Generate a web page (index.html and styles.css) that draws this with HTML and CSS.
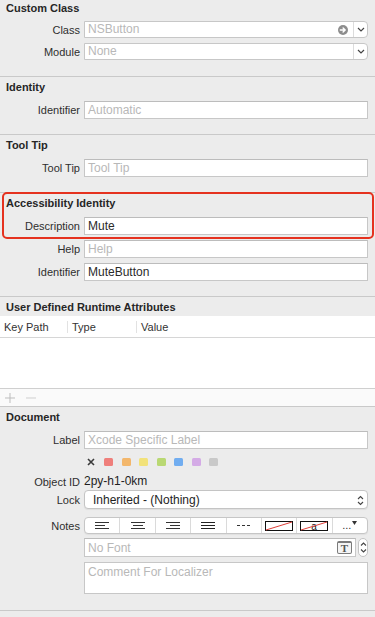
FILE: index.html
```html
<!DOCTYPE html>
<html lang="en">
<head>
<meta charset="utf-8">
<title>Identity Inspector</title>
<link rel="stylesheet" href="styles.css">
</head>
<body>
<div class="inspector">

  <section class="sec sec-first">
    <h3 class="sec-title">Custom Class</h3>
    <div class="rows">
      <div class="row">
        <span class="lbl">Class</span>
        <div class="combo">
          <span class="combo-text ph">NSButton</span>
          <span class="go-icon"><svg width="10" height="10" viewBox="0 0 10 10"><circle cx="5" cy="5" r="5" fill="#8d8d8d"/><path d="M2.3 5h4.8M5.1 2.9L7.2 5 5.1 7.1" stroke="#fff" stroke-width="1.4" fill="none" stroke-linecap="round" stroke-linejoin="round"/></svg></span>
          <span class="combo-btn"><svg width="8" height="5" viewBox="0 0 8 5"><path d="M1 1l3 3 3-3" stroke="#444" stroke-width="1.2" fill="none"/></svg></span>
        </div>
      </div>
      <div class="row">
        <span class="lbl">Module</span>
        <div class="combo">
          <span class="combo-text ph">None</span>
          <span class="combo-btn"><svg width="8" height="5" viewBox="0 0 8 5"><path d="M1 1l3 3 3-3" stroke="#444" stroke-width="1.2" fill="none"/></svg></span>
        </div>
      </div>
    </div>
  </section>

  <section class="sec">
    <h3 class="sec-title">Identity</h3>
    <div class="rows">
      <div class="row">
        <span class="lbl">Identifier</span>
        <div class="field ph">Automatic</div>
      </div>
    </div>
  </section>

  <section class="sec">
    <h3 class="sec-title">Tool Tip</h3>
    <div class="rows">
      <div class="row">
        <span class="lbl">Tool Tip</span>
        <div class="field ph">Tool Tip</div>
      </div>
    </div>
  </section>

  <section class="sec">
    <div class="highlight"></div>
    <h3 class="sec-title">Accessibility Identity</h3>
    <div class="rows">
      <div class="row">
        <span class="lbl">Description</span>
        <div class="field">Mute</div>
      </div>
      <div class="row">
        <span class="lbl">Help</span>
        <div class="field ph">Help</div>
      </div>
      <div class="row">
        <span class="lbl">Identifier</span>
        <div class="field">MuteButton</div>
      </div>
    </div>
  </section>

  <section class="sec sec-table">
    <h3 class="sec-title sec-title-tight">User Defined Runtime Attributes</h3>
    <div class="attr-table">
      <div class="attr-head">
        <span class="col">Key Path</span>
        <span class="col col-sep">Type</span>
        <span class="col col-sep">Value</span>
      </div>
      <div class="attr-body"></div>
      <div class="attr-foot">
        <svg width="10" height="10" viewBox="0 0 10 10"><path d="M5 0v10M0 5h10" stroke="#bdbdbd" stroke-width="1"/></svg>
        <svg width="10" height="10" viewBox="0 0 10 10"><path d="M0 5h10" stroke="#cfcfcf" stroke-width="1"/></svg>
      </div>
    </div>
  </section>

  <section class="sec sec-doc">
    <h3 class="sec-title">Document</h3>
    <div class="doc-rows">
      <div class="row">
        <span class="lbl">Label</span>
        <div class="field ph">Xcode Specific Label</div>
      </div>
      <div class="row row-swatches">
        <span class="lbl"></span>
        <div class="swatches">
          <svg class="swatch-x" width="8" height="8" viewBox="0 0 8 8"><path d="M1 1l6 6M7 1L1 7" stroke="#3a3a3a" stroke-width="1.6"/></svg>
          <span class="swatch sw-red"></span>
          <span class="swatch sw-orange"></span>
          <span class="swatch sw-yellow"></span>
          <span class="swatch sw-green"></span>
          <span class="swatch sw-blue"></span>
          <span class="swatch sw-purple"></span>
          <span class="swatch sw-gray"></span>
        </div>
      </div>
      <div class="row row-objid">
        <span class="lbl">Object ID</span>
        <span class="value">2py-h1-0km</span>
      </div>
      <div class="row row-lock">
        <span class="lbl">Lock</span>
        <div class="popup">
          <span class="popup-text">Inherited - (Nothing)</span>
          <svg width="7" height="11" viewBox="0 0 7 11"><path d="M1 4l2.5-2.5L6 4M1 7l2.5 2.5L6 7" stroke="#444" stroke-width="1.1" fill="none"/></svg>
        </div>
      </div>
      <div class="row row-notes">
        <span class="lbl">Notes</span>
        <div class="segmented">
          <span class="seg"><svg width="14" height="7" viewBox="0 0 14 7"><path d="M0 .5h14M0 3.5h10M0 6.5h14" stroke="#333" stroke-width="1"/></svg></span>
          <span class="seg"><svg width="14" height="7" viewBox="0 0 14 7"><path d="M0 .5h14M2 3.5h10M0 6.5h14" stroke="#333" stroke-width="1"/></svg></span>
          <span class="seg"><svg width="14" height="7" viewBox="0 0 14 7"><path d="M0 .5h14M4 3.5h10M0 6.5h14" stroke="#333" stroke-width="1"/></svg></span>
          <span class="seg"><svg width="14" height="7" viewBox="0 0 14 7"><path d="M0 .5h14M0 3.5h14M0 6.5h14" stroke="#222" stroke-width="1.2"/></svg></span>
          <span class="seg"><svg width="13" height="3" viewBox="0 0 13 3"><path d="M0 1.5h3M5 1.5h3M10 1.5h3" stroke="#333" stroke-width="1.1"/></svg></span>
          <span class="seg"><svg width="28" height="10" viewBox="0 0 28 10"><rect x=".5" y=".5" width="27" height="9" fill="#fff" stroke="#111"/><path d="M1 9L27 1" stroke="#e0403a" stroke-width="1"/></svg></span>
          <span class="seg"><svg width="28" height="10" viewBox="0 0 28 10"><rect x=".5" y=".5" width="27" height="9" fill="#fff" stroke="#111"/><text x="14" y="9" font-family="Liberation Sans, Arial, sans-serif" font-size="10" text-anchor="middle" fill="#222">a</text><path d="M1 9L27 1" stroke="#e0403a" stroke-width="1"/></svg></span>
          <span class="seg seg-more">...<svg width="5" height="4" viewBox="0 0 5 4"><path d="M0 0h5L2.5 4z" fill="#333"/></svg></span>
        </div>
      </div>
      <div class="row row-font">
        <span class="lbl"></span>
        <div class="font-line">
          <div class="field font-field">
            <span class="ph">No Font</span>
            <span class="font-btn">T</span>
          </div>
          <span class="stepper"><svg width="7" height="13" viewBox="0 0 7 13"><path d="M1 4.5l2.5-2.5L6 4.5M1 8.5l2.5 2.5L6 8.5" stroke="#444" stroke-width="1.1" fill="none"/></svg></span>
        </div>
      </div>
      <div class="row row-comment">
        <span class="lbl"></span>
        <div class="textarea ph">Comment For Localizer</div>
      </div>
    </div>
  </section>

  <section class="sec sec-end"></section>
</div>
</body>
</html>
```

FILE: styles.css
```css
* {
  box-sizing: border-box;
  margin: 0;
  padding: 0;
}

html,
body {
  background: #ececec;
}

body {
  width: 375px;
  height: 617px;
  overflow: hidden;
  font-family: "Liberation Sans", Arial, sans-serif;
  font-size: 11px;
  color: #2a2a2a;
}

.inspector {
  display: flex;
  flex-direction: column;
}

.sec {
  position: relative;
  border-top: 1px solid #c9c9c9;
  padding: 2px 0 15px;
}

.sec-first {
  border-top: 0;
  padding: 0 0 16px;
}

.sec-title {
  font-size: 11px;
  font-weight: bold;
  line-height: 16px;
  padding-left: 6px;
  margin-bottom: 6px;
  color: #262626;
}

.sec-first .sec-title {
  margin-bottom: 5px;
}

.sec-title-tight {
  margin-bottom: 1px;
}

.rows {
  display: flex;
  flex-direction: column;
  gap: 5px;
}

.row {
  display: grid;
  grid-template-columns: 80px 1fr;
  column-gap: 4px;
  align-items: center;
  padding-right: 7px;
}

.lbl {
  text-align: right;
  color: #2e2e2e;
  font-size: 11px;
  line-height: 14px;
}

.ph {
  color: #b8b8b8;
}

.field {
  height: 18px;
  background: #fff;
  border: 1px solid #c7c7c7;
  border-top-color: #bcbcbc;
  padding: 0 3px;
  font-size: 12px;
  line-height: 16px;
  white-space: nowrap;
  overflow: hidden;
}

/* combo box */
.combo {
  display: flex;
  align-items: center;
  height: 17px;
  background: #fff;
  border: 1px solid #c7c7c7;
  border-radius: 0 4px 4px 0;
  font-size: 12px;
  line-height: 15px;
}

.combo-text {
  flex: 1;
  padding-left: 3px;
}

.go-icon {
  display: flex;
  margin-right: 5px;
}

.combo-btn {
  width: 14px;
  align-self: stretch;
  border-left: 1px solid #dcdcdc;
  display: flex;
  align-items: center;
  justify-content: center;
}

/* red annotation */
.highlight {
  position: absolute;
  left: 2px;
  right: 1px;
  top: -1px;
  height: 47px;
  border: 2.5px solid #e5321f;
  border-radius: 5px;
  pointer-events: none;
}

/* runtime attributes */
.sec-table {
  padding-bottom: 0;
}

.attr-table {
  background: #fff;
}

.attr-head {
  display: grid;
  grid-template-columns: 67px 69px 1fr;
  align-items: center;
  height: 22px;
  border-bottom: 1px solid #d6d6d6;
  color: #333;
}

.col {
  padding-left: 4px;
  line-height: 12px;
}

.col-sep {
  border-left: 1px solid #e2e2e2;
}

.attr-body {
  height: 50px;
}

.attr-foot {
  height: 18px;
  border-top: 1px solid #cfcfcf;
  background: #fafafa;
  display: flex;
  align-items: center;
  gap: 11px;
  padding-left: 5px;
}

/* document */
.sec-doc {
  padding-bottom: 16px;
}

.doc-rows {
  display: flex;
  flex-direction: column;
}

.row-swatches {
  margin-top: 5px;
  height: 15px;
}

.swatches {
  display: flex;
  align-items: center;
  padding-left: 3px;
}

.swatch-x {
  margin-right: 9px;
}

.swatch {
  width: 9px;
  height: 8px;
  border-radius: 1.5px;
  margin-right: 8.5px;
}

.sw-red { background: #ef7f7b; }
.sw-orange { background: #f3b76c; }
.sw-yellow { background: #f2e27a; }
.sw-green { background: #b9d873; }
.sw-blue { background: #71adf0; }
.sw-purple { background: #d4abe6; }
.sw-gray { background: #c9c9c9; }

.row-objid {
  margin-top: 5px;
  height: 15px;
}

.value {
  font-size: 12px;
  color: #1e1e1e;
  line-height: 15px;
}

.row-lock {
  margin-top: 1px;
}

.popup {
  height: 19px;
  background: #fff;
  border: 1px solid #c4c4c4;
  border-radius: 4px;
  box-shadow: 0 1px 1px rgba(0, 0, 0, 0.06);
  display: flex;
  align-items: center;
  justify-content: space-between;
  padding: 1px 3px 0 8px;
  font-size: 12px;
  color: #1e1e1e;
}

.row-notes {
  margin-top: 8px;
}

.segmented {
  height: 17px;
  display: flex;
  background: #fff;
  border: 1px solid #c6c6c6;
  border-radius: 4px;
  box-shadow: 0 1px 1px rgba(0, 0, 0, 0.05);
}

.seg {
  flex: 1;
  display: flex;
  align-items: center;
  justify-content: center;
}

.seg + .seg {
  border-left: 1px solid #dadada;
}

.seg-more {
  font-size: 11px;
  color: #333;
  line-height: 10px;
  align-items: flex-start;
  padding-top: 2px;
  gap: 1px;
}

.seg-more svg {
  margin-top: 1px;
}

.row-font {
  margin-top: 4px;
}

.font-line {
  display: flex;
  align-items: center;
  gap: 2px;
}

.font-field {
  flex: 1;
  height: 19px;
  display: flex;
  align-items: center;
  justify-content: space-between;
  padding-right: 3px;
}

.font-btn {
  width: 15px;
  height: 13px;
  border: 1.5px solid #7b7b7b;
  border-top-width: 2px;
  border-radius: 2px;
  background: #f4f4f4;
  font-family: "Liberation Serif", "Times New Roman", serif;
  font-weight: bold;
  font-size: 11px;
  line-height: 10px;
  text-align: center;
  color: #555;
}

.stepper {
  width: 10px;
  height: 19px;
  border: 1px solid #c4c4c4;
  border-radius: 5px;
  background: #fff;
  display: flex;
  align-items: center;
  justify-content: center;
}

.row-comment {
  margin-top: 5px;
  align-items: start;
}

.textarea {
  height: 32px;
  background: #fff;
  border: 1px solid #c7c7c7;
  padding: 2px 3px;
  font-size: 12px;
  line-height: 15px;
}

.sec-end {
  height: 7px;
  padding: 0;
}
```
